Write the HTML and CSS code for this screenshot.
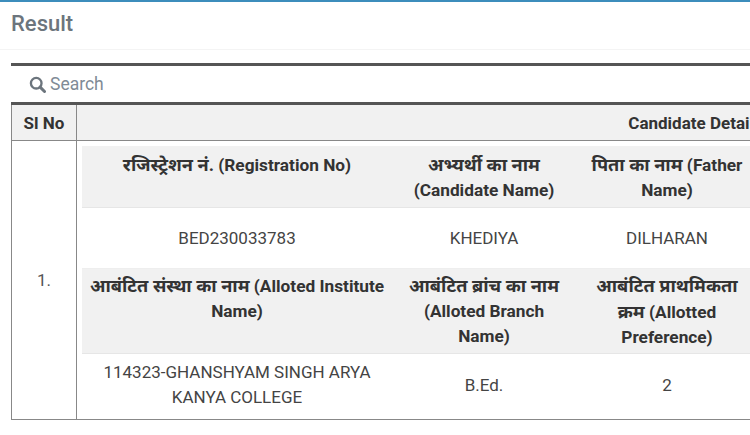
FILE: index.html
```html
<!DOCTYPE html>
<html lang="hi">
<head>
<meta charset="utf-8">
<title>Result</title>
<link rel="stylesheet" href="styles.css">
</head>
<body>
<header class="page-head"><h1>Result</h1></header>
<section class="panel">
  <div class="search">
    <svg class="search-icon" viewBox="0 0 16 16" width="17" height="17" aria-hidden="true"><circle cx="6.8" cy="6.8" r="5" fill="none" stroke="currentColor" stroke-width="2.2"/><path d="M10.5 10.5 L14.6 14.6" stroke="currentColor" stroke-width="2.8" stroke-linecap="round"/></svg>
    <span>Search</span>
  </div>
  <table class="outer">
    <thead>
      <tr><th class="sl">Sl No</th><th class="details">Candidate Details</th></tr>
    </thead>
    <tbody>
      <tr>
        <td class="num">1.</td>
        <td class="holder">
          <table class="inner">
            <colgroup><col class="c1"><col class="c2"><col class="c3"></colgroup>
            <tr class="r1"><th><span class="hi">रजिस्ट्रेशन नं.</span> (Registration No)</th><th><span class="hi">अभ्यर्थी का नाम</span> (Candidate Name)</th><th><span class="hi">पिता का नाम</span> (Father Name)</th></tr>
            <tr class="r2"><td>BED230033783</td><td>KHEDIYA</td><td>DILHARAN</td></tr>
            <tr class="r3"><th><span class="hi">आबंटित संस्था का नाम</span> (Alloted Institute Name)</th><th><span class="hi">आबंटित ब्रांच का नाम</span> (Alloted Branch Name)</th><th><span class="hi">आबंटित प्राथमिकता क्रम</span> (Allotted Preference)</th></tr>
            <tr class="r4"><td>114323-GHANSHYAM SINGH ARYA KANYA COLLEGE</td><td>B.Ed.</td><td>2</td></tr>
          </table>
        </td>
      </tr>
    </tbody>
  </table>
</section>
</body>
</html>
```
FILE: styles.css
```css
html, body { margin: 0; padding: 0; }
body {
  width: 750px;
  height: 435px;
  overflow: hidden;
  background: #fff;
  font-family: Roboto, "Noto Sans", "Noto Sans Devanagari", sans-serif;
  font-size: 17px;
  color: #444;
  border-top: 2px solid #3c8dbc;
  box-sizing: border-box;
}
.page-head {
  height: 47px;
  border-bottom: 1px solid #f4f4f4;
  padding-left: 11px;
}
.page-head h1 {
  margin: 0;
  font-size: 22px;
  font-weight: 500;
  line-height: 44px;
  color: #6c757d;
}
.panel {
  margin: 13px 0 0 11px;
  width: 1304px;
  border-top: 3px solid #555;
}
.search {
  height: 36px;
  display: flex;
  align-items: center;
  gap: 4px;
  padding-left: 18px;
  color: #808b96;
  font-size: 17.5px;
}
.search-icon { color: #6c757d; }
.outer {
  border-collapse: collapse;
  width: 1304px;
  table-layout: fixed;
  border-top: 3px solid #555;
}
.outer > thead th {
  height: 35px;
  padding: 0;
  background: #f1f1f1;
  border: 1px solid #888;
  border-top: 0;
  font-size: 17px;
  font-weight: 700;
  color: #333;
}
.sl { width: 64px; }
.num {
  border: 1px solid #888;
  text-align: center;
  padding: 0;
  color: #555;
}
.holder {
  border: 1px solid #888;
  padding: 5px 0 0 5px;
  vertical-align: top;
}
.inner {
  border-collapse: collapse;
  table-layout: fixed;
  width: 676px;
}
.c1 { width: 310px; }
.c2 { width: 184px; }
.c3 { width: 182px; }
.inner th, .inner td {
  padding: 5px 8px;
  text-align: center;
  line-height: 25px;
  vertical-align: top;
  font-size: 17px;
}
.inner th {
  background: #f1f1f1;
  font-weight: 700;
  font-size: 17.25px;
  color: #333;
  border-bottom: 1px solid #e6e6e6;
}
.inner td {
  color: #444;
  vertical-align: middle;
  border-bottom: 1px solid #eee;
}
.hi { font-size: 18.2px; font-weight: 700; }
.r1 th { height: 51px; padding-top: 6px; padding-bottom: 4px; }
.r2 td { height: 50px; }
.r3 th { height: 75px; padding-top: 4px; padding-bottom: 3px; }
.r4 td { height: 50px; padding-top: 6px; padding-bottom: 9px; border-bottom: 0; }
.inner tr > :first-child { padding-left: 4px; padding-right: 4px; }
```
